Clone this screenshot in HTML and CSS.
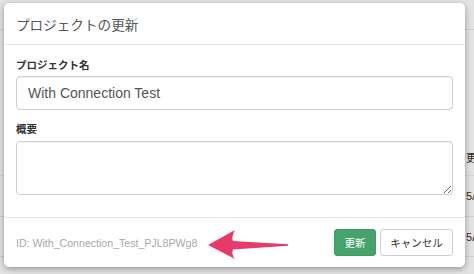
FILE: index.html
```html
<!DOCTYPE html>
<html lang="ja">
<head>
<meta charset="utf-8">
<title>プロジェクトの更新</title>
<link rel="stylesheet" href="styles.css">
</head>
<body>
<div class="page">
  <div class="row row-head"></div>
  <div class="row row-spacer"></div>
  <div class="row row-a"><span class="cell-right">更</span></div>
  <div class="row row-b"><span class="cell-right">5ʌ</span></div>
  <div class="row row-c"><span class="cell-right">5ʌ</span></div>
</div>

<div class="modal">
  <div class="modal-header">
    <h4 class="modal-title">プロジェクトの更新</h4>
  </div>
  <div class="modal-body">
    <label class="field-label">プロジェクト名</label>
    <input class="field-input" type="text" value="With Connection Test">
    <label class="field-label second">概要</label>
    <textarea class="field-textarea"></textarea>
  </div>
  <div class="modal-footer">
    <span class="project-id">ID: With_Connection_Test_PJL8PWg8</span>
    <div class="actions">
      <button class="btn btn-success">更新</button>
      <button class="btn btn-default">キャンセル</button>
    </div>
  </div>
  <svg class="arrow" width="95" height="40" viewBox="0 0 95 40">
    <path d="M4 20 L31 5 Q27 12 29 16 L84 19.2 L84 20.8 L29 24.5 Q27 29 31 34 Z" fill="#e63a6b"/>
  </svg>
</div>
</body>
</html>
```

FILE: styles.css
```css
html, body {
  margin: 0;
  padding: 0;
}

body {
  width: 474px;
  height: 274px;
  overflow: hidden;
  background: #e3e3e3;
  font-family: "Liberation Sans", "Noto Sans CJK JP", sans-serif;
  position: relative;
}

.page {
  display: flex;
  flex-direction: column;
  color: #2a2a2a;
  font-size: 11px;
}

.row {
  display: flex;
  align-items: center;
  justify-content: flex-end;
  border-bottom: 1px solid #cfcfcf;
  box-sizing: border-box;
}

.cell-right {
  width: 8px;
  font-size: 11px;
  line-height: 12px;
  white-space: nowrap;
  overflow: hidden;
}

.row-head {
  height: 30px;
}

.row-spacer {
  height: 115px;
  border-bottom: none;
}

.row-a {
  height: 31px;
  align-items: flex-start;
  padding-top: 7px;
  border-bottom-color: #d4d4d4;
}

.row-b {
  height: 41px;
}

.row-c {
  height: 40px;
}

.modal {
  position: absolute;
  left: 4px;
  top: 3px;
  width: 461px;
  height: 264px;
  background: #fff;
  border-radius: 5px;
  box-shadow: 0 2px 6px rgba(0, 0, 0, 0.35);
  display: flex;
  flex-direction: column;
  box-sizing: border-box;
}

.modal-header {
  height: 42px;
  box-sizing: border-box;
  padding: 0 12px;
  display: flex;
  align-items: center;
  border-bottom: 1px solid #e8e8e8;
}

.modal-title {
  margin: 0;
  font-size: 13.6px;
  font-weight: normal;
  color: #555;
}

.modal-body {
  padding: 13px 12px 0 12px;
  height: 173px;
  box-sizing: border-box;
  display: flex;
  flex-direction: column;
  border-bottom: 1px solid #e8e8e8;
}

.field-label {
  font-size: 10.5px;
  line-height: 14px;
  font-weight: bold;
  color: #333;
  margin-bottom: 4px;
}

.field-label.second {
  margin-top: 12px;
  margin-bottom: 5px;
}

.field-input {
  height: 34px;
  box-sizing: border-box;
  border: 1px solid #cfcfcf;
  border-radius: 4px;
  padding: 0 11px;
  font-family: "Liberation Sans", "Noto Sans CJK JP", sans-serif;
  font-size: 14px;
  color: #555;
  box-shadow: inset 0 1px 1px rgba(0, 0, 0, 0.06);
  outline: none;
}

.field-textarea {
  height: 54px;
  box-sizing: border-box;
  border: 1px solid #cfcfcf;
  border-radius: 4px;
  box-shadow: inset 0 1px 1px rgba(0, 0, 0, 0.06);
  resize: vertical;
  outline: none;
  margin: 0;
}

.modal-footer {
  flex: 1;
  display: flex;
  align-items: center;
  justify-content: space-between;
  padding: 0 12px;
}

.project-id {
  font-size: 10.6px;
  color: #a8a8a8;
}

.actions {
  display: flex;
  gap: 4px;
}

.btn {
  height: 27px;
  box-sizing: border-box;
  border-radius: 3px;
  font-family: "Liberation Sans", "Noto Sans CJK JP", sans-serif;
  font-size: 10.5px;
  padding: 0;
  cursor: pointer;
}

.btn-success {
  width: 42px;
  background: #47a36c;
  border: 1px solid #40996a;
  color: #fff;
}

.btn-default {
  width: 73px;
  background: #fff;
  border: 1px solid #cfcfcf;
  color: #333;
}

.arrow {
  position: absolute;
  left: 200px;
  top: 222px;
}
```
